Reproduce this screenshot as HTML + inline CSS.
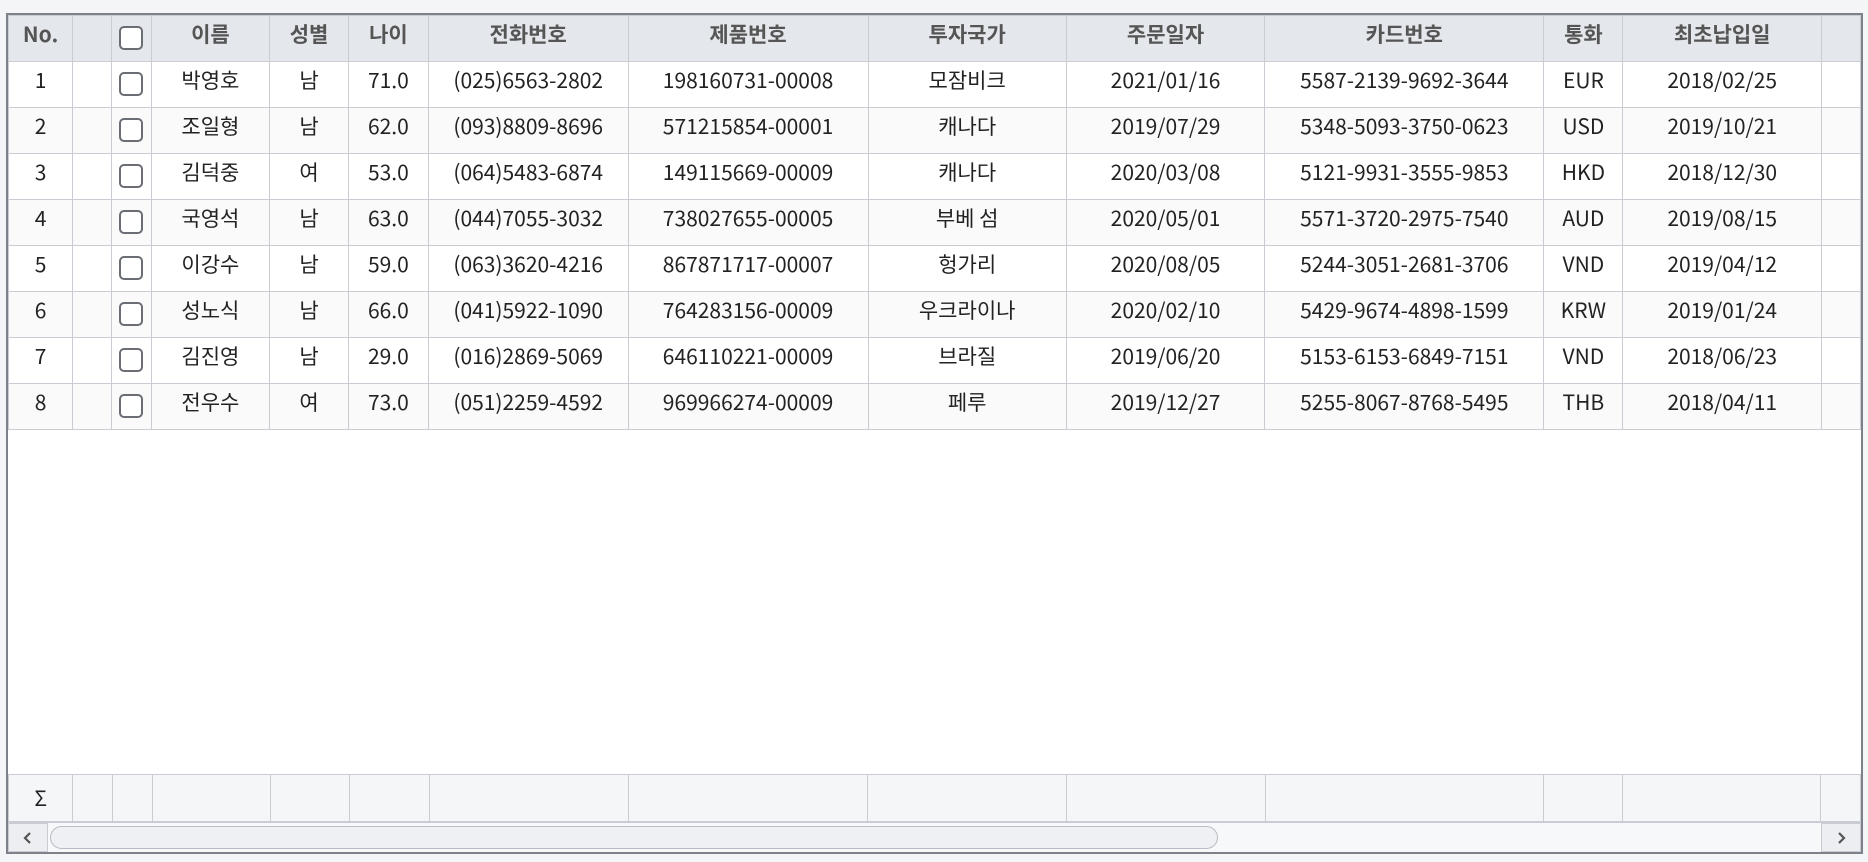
<!DOCTYPE html>
<html><head><meta charset="utf-8"><style>
*{box-sizing:border-box;margin:0;padding:0}
body{width:1868px;height:862px;background:#f4f5f7;font-family:"Noto Sans CJK KR","Liberation Sans",sans-serif;position:relative;overflow:hidden}
#g{position:absolute;left:6px;top:13px;width:1857px;height:841px;border:2px solid #7d828a;background:#fff;overflow:hidden}
table{border-collapse:collapse;table-layout:fixed;position:absolute;left:0;top:0}
td,th{border:1px solid #c9cdd3;text-align:center;font-size:21px;color:#222;white-space:nowrap;overflow:hidden;padding:0 0 9px 0;line-height:24px}
th{background:#e4e7eb;color:#555;font-weight:bold;height:46px}
tbody td{height:46px;font-weight:normal}
tbody tr:nth-child(even) td{background:#fafafa}
.cb{display:inline-block;width:24px;height:24px;border:2px solid #6a6e74;border-radius:5px;background:#fff;vertical-align:middle;position:relative;top:3px}
#f{position:absolute;left:0;top:759px}
#f td{height:47px;background:#f5f6f8;padding:0}
#sb{position:absolute;left:0;top:807px;width:1853px;height:30px;background:#f7f8fa;border-top:1px solid #c9cdd3}
.btn{position:absolute;top:0;width:40px;height:29px;background:#eceef1;border:1px solid #c9cdd3}
.btn svg{position:absolute;left:13px;top:7px}
#th{position:absolute;left:42px;top:3px;width:1168px;height:23px;border:1px solid #b9bdc3;border-radius:12px;background:#eef0f3}
</style></head><body>
<div id="g">
<table>
<colgroup><col style="width:65px"><col style="width:40px"><col style="width:40px"><col style="width:120px"><col style="width:80px"><col style="width:81px"><col style="width:201px"><col style="width:242px"><col style="width:201px"><col style="width:201px"><col style="width:281px"><col style="width:80px"><col style="width:201px"><col style="width:40px"></colgroup>
<thead><tr><th>No.</th><th></th><th><span class="cb"></span></th><th>이름</th><th>성별</th><th>나이</th><th>전화번호</th><th>제품번호</th><th>투자국가</th><th>주문일자</th><th>카드번호</th><th>통화</th><th>최초납입일</th><th></th></tr></thead>
<tbody>
<tr><td>1</td><td></td><td><span class="cb"></span></td><td>박영호</td><td>남</td><td>71.0</td><td>(025)6563-2802</td><td>198160731-00008</td><td>모잠비크</td><td>2021/01/16</td><td>5587-2139-9692-3644</td><td>EUR</td><td>2018/02/25</td><td></td></tr>
<tr><td>2</td><td></td><td><span class="cb"></span></td><td>조일형</td><td>남</td><td>62.0</td><td>(093)8809-8696</td><td>571215854-00001</td><td>캐나다</td><td>2019/07/29</td><td>5348-5093-3750-0623</td><td>USD</td><td>2019/10/21</td><td></td></tr>
<tr><td>3</td><td></td><td><span class="cb"></span></td><td>김덕중</td><td>여</td><td>53.0</td><td>(064)5483-6874</td><td>149115669-00009</td><td>캐나다</td><td>2020/03/08</td><td>5121-9931-3555-9853</td><td>HKD</td><td>2018/12/30</td><td></td></tr>
<tr><td>4</td><td></td><td><span class="cb"></span></td><td>국영석</td><td>남</td><td>63.0</td><td>(044)7055-3032</td><td>738027655-00005</td><td>부베 섬</td><td>2020/05/01</td><td>5571-3720-2975-7540</td><td>AUD</td><td>2019/08/15</td><td></td></tr>
<tr><td>5</td><td></td><td><span class="cb"></span></td><td>이강수</td><td>남</td><td>59.0</td><td>(063)3620-4216</td><td>867871717-00007</td><td>헝가리</td><td>2020/08/05</td><td>5244-3051-2681-3706</td><td>VND</td><td>2019/04/12</td><td></td></tr>
<tr><td>6</td><td></td><td><span class="cb"></span></td><td>성노식</td><td>남</td><td>66.0</td><td>(041)5922-1090</td><td>764283156-00009</td><td>우크라이나</td><td>2020/02/10</td><td>5429-9674-4898-1599</td><td>KRW</td><td>2019/01/24</td><td></td></tr>
<tr><td>7</td><td></td><td><span class="cb"></span></td><td>김진영</td><td>남</td><td>29.0</td><td>(016)2869-5069</td><td>646110221-00009</td><td>브라질</td><td>2019/06/20</td><td>5153-6153-6849-7151</td><td>VND</td><td>2018/06/23</td><td></td></tr>
<tr><td>8</td><td></td><td><span class="cb"></span></td><td>전우수</td><td>여</td><td>73.0</td><td>(051)2259-4592</td><td>969966274-00009</td><td>페루</td><td>2019/12/27</td><td>5255-8067-8768-5495</td><td>THB</td><td>2018/04/11</td><td></td></tr>
</tbody></table>
<table id="f">
<colgroup><col style="width:65px"><col style="width:40px"><col style="width:40px"><col style="width:120px"><col style="width:80px"><col style="width:81px"><col style="width:201px"><col style="width:242px"><col style="width:201px"><col style="width:201px"><col style="width:281px"><col style="width:80px"><col style="width:201px"><col style="width:40px"></colgroup>
<tr><td>Σ</td><td></td><td></td><td></td><td></td><td></td><td></td><td></td><td></td><td></td><td></td><td></td><td></td><td></td></tr></table>
<div id="sb"><div class="btn" style="left:0"><svg width="12" height="14" viewBox="0 0 12 14"><path d="M8 2 L3 7 L8 12" fill="none" stroke="#555" stroke-width="2.2"/></svg></div><div id="th"></div><div class="btn" style="right:0"><svg width="12" height="14" viewBox="0 0 12 14"><path d="M4 2 L9 7 L4 12" fill="none" stroke="#555" stroke-width="2.2"/></svg></div></div>
</div>
</body></html>
